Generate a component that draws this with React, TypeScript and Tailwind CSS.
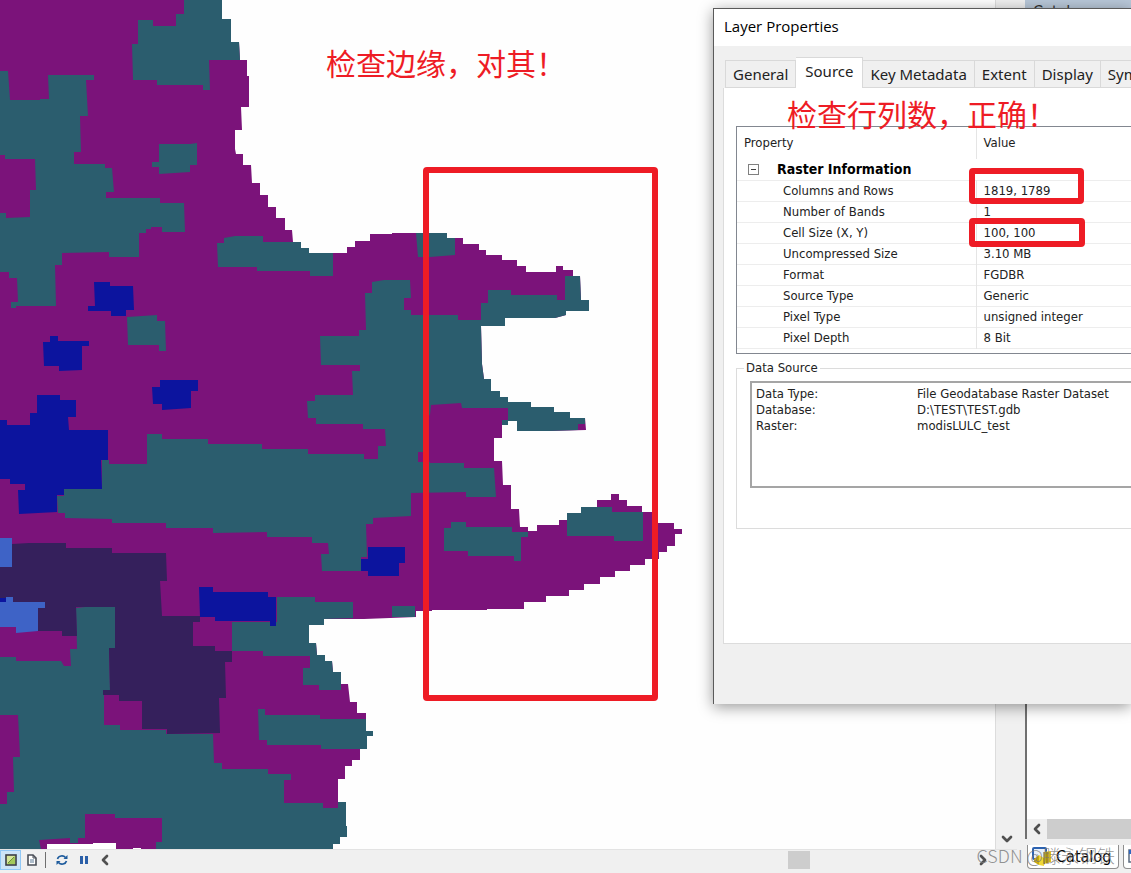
import React, { useState } from 'react';

import { clsx } from 'clsx';

import {
  ChevronDown,
  ChevronLeft,
  ChevronRight,
} from 'lucide-react';

interface Region {
  fill: string;
  d: string;
}

const COLORS = {
  purple: '#7b137a',
  teal: '#2b5d6e',
  indigo: '#35205c',
  blue: '#0c149e',
  sky: '#3e63c6',
};

/*
 * Regiones del ráster, de abajo hacia arriba
 */
const REGIONS: Region[] = [
  {
    fill: COLORS.purple,
    d: 'M0 0H222V19H231V42H239L240 60H247V76H249V107H241L242 130H235V149L236 154H243V165H251L252 183H260V195H268V207H276V218H285V230H292L293 242H301V248H309V253H347V247H355V241H370V234H392V233H447V238H463V244H479V250H486V255H502V260H517V266H526V272H556V266H563V270H573V276H580L581 300H589V311H566V315L555 318H505V326H481L482 364L484 379H491V391H500V397H508V402H531V407H554V412H570V418H585L586 430L549 431H517V421H508V425H502V438H494V461H502L503 485H511V509H519L520 527H528V531H537V525H559V520H567V513H581V507H597V500H611V494H619V500H627V506H642V512H652V523H674V529H682V534H675V546H667V552H659V559H645V565H630V571H615V577H600V584H584V590H569V596H546V602H524V609H487V610H432V611H416V617L364 619H324V625H309V643H316L317 655H325V661H332L333 672H341V684H348L350 702H357V713H366V731H373V736H367V749H360V760H352V766H345V779H338V802H346V826H347V837H340V844H333V849H0Z',
  },
  {
    fill: COLORS.teal,
    d: 'M184 0H222V19H231V42H239L240 60H209L210 90H203V85H157V80H133L132 44H138V20H153V26H176V14H184Z',
  },
  {
    fill: COLORS.teal,
    d: 'M0 71H8L10 100H40V99H49L48 75H94V80H86L88 116H80L81 152H74V164H105V168H112L114 192H106V198H160V203H184L185 232H162V227H151V229H146V233H139V257H109V252L62 253V265H55L56 306H16V308H11V302H18L17 278H9V272H0V213H6V218L30 217V190H36L35 159H5V155H0Z',
  },
  {
    fill: COLORS.teal,
    d: 'M159 144H190L197 143V165H190V172L159 174V167H152V162H159Z',
  },
  {
    fill: COLORS.teal,
    d: 'M217 243H224V238L235 236H263V242H301V248H309V253H333V276H310V271H257V267H218Z',
  },
  {
    fill: COLORS.teal,
    d: 'M127 317L157 315V321H165L166 351H159V345H128Z',
  },
  {
    fill: COLORS.teal,
    d: 'M416 233H447V238H455V255L430 257H418Z',
  },
  {
    fill: COLORS.teal,
    d: 'M372 282L384 280H410L411 298H404V310H411V315H458V320H481V303H488V290H511V295H557V300H565V276H580L581 300H589V311H566V315L555 318H505V326H481L482 364L484 379H491V391H500V397H508V402H531V407H554V412H570V418H585V424H578V430L549 431H517V421H508V425H502V420H508V408H462L461 403L431 405L430 415H424V452H418V462H430V463H464V468H494L496 497H466V492L411 493V516L373 518V524H366L367 557H361V571H322L321 554H329L328 543H312V537H267V532L213 533V528H166V523H112V519L65 518V513H58L57 496H64V489H102V460H109V464H147V434H162V439H208V444H262V449H308V454H364V459H378V446H386L385 429H363V424H316V418H308L307 401H315V395H353L352 371H360V365H321L320 336H359V330H366L365 293H372Z',
  },
  {
    fill: COLORS.teal,
    d: 'M444 528H451V522H466V527H512V532H528V537H521V561H514V556H468V551H444Z',
  },
  {
    fill: COLORS.teal,
    d: 'M567 513H581V507H612V512H643V541H614V536H567Z',
  },
  {
    fill: COLORS.teal,
    d: 'M392 606H415V617H392Z',
  },
  {
    fill: COLORS.teal,
    d: 'M277 597H315V602H353V618L324 619V625H309V643H316L317 655H325V661H332L333 672H341V690H319V685H303V668H310V656H263V651H232V622H277Z',
  },
  {
    fill: COLORS.teal,
    d: 'M258 709H265V715H320V719H366V731H373V736H367V749H321V745H267V740H259Z',
  },
  {
    fill: COLORS.teal,
    d: 'M76 608L85 607H115V648H109L110 690H104V725H120V730H166V734H213L214 763H222V769H268V774H291V780H284V803H323V808H338V802H346V826H347V837H340V844H333V849H156V842H162V818H115V814H85V838H78V843H70V838L39 840L41 849H0V804H7V792H14L13 757H20L18 715H0V657H16V661H61L64 666H71L70 649H77Z',
  },
  {
    fill: COLORS.indigo,
    d: 'M0 567H12V544L29 543H66V548H112V553H166L167 581H160L162 616H200V622H193V646H215V651H232V662H225L226 698H219L220 733L167 734V729H142V701H119V695H103V690H110L109 648H115V607H76L77 636H62V631H38V602H0Z',
  },
  {
    fill: COLORS.sky,
    d: 'M0 538H12V567H0ZM0 602H6V597H13V602H45V608H38V631L16 633V627H0Z',
  },
  {
    fill: COLORS.blue,
    d: 'M0 598H6V602H0ZM94 282H110V286H133L134 310H126V316H111V311H88V306H95ZM43 342H50V336H58V341H89V346H82V370L59 371V366H44ZM160 380H198V391H191V408L162 410V404H153L152 387H160ZM37 395H60V400H76V417H68L69 430H108V460H101L102 489H64V495H57V512L19 514L18 490H25V484H10V479H0V420H7V425H30V413H37ZM368 547H405V563H399V576H368V571H361V559H368ZM199 587H213V592H268V597H276V626H270V621H215V617H200Z',
  },
  {
    fill: '#ffffff',
    d: 'M47 844H93V843H116V849H47ZM133 848H141V849H133Z',
  },
];

const TABS = [
  'General',
  'Source',
  'Key Metadata',
  'Extent',
  'Display',
  'Symbology',
];

const RASTER_INFO = [
  ['Columns and Rows', '1819, 1789'],
  ['Number of Bands', '1'],
  ['Cell Size (X, Y)', '100, 100'],
  ['Uncompressed Size', '3.10 MB'],
  ['Format', 'FGDBR'],
  ['Source Type', 'Generic'],
  ['Pixel Type', 'unsigned integer'],
  ['Pixel Depth', '8 Bit'],
];

const DATA_SOURCE = [
  ['Data Type:', 'File Geodatabase Raster Dataset'],
  ['Database:', 'D:\\TEST\\TEST.gdb'],
  ['Raster:', 'modisLULC_test'],
];

const MapView: React.FC = () => (
  <div className="relative min-w-0 flex-1 overflow-hidden bg-[#fefefe]">
    <svg
      width="995"
      height="849"
      viewBox="0 0 995 849"
      className="block max-w-none"
      aria-label="Raster map"
    >
      {REGIONS.map((region, i) => (
        <path key={i} fill={region.fill} d={region.d} />
      ))}

      <rect
        x="426"
        y="170"
        width="229"
        height="528"
        rx="1"
        fill="none"
        stroke="#ee1c25"
        strokeWidth="6"
        strokeLinejoin="round"
      />
    </svg>
  </div>
);

const DataViewIcon: React.FC = () => (
  <svg width="12" height="12" viewBox="0 0 12 12">
    <rect x="1" y="1" width="10" height="10" fill="#d6e69a" stroke="#3b3f45" strokeWidth="1.6" />
    <path d="M2 10L10 2V10Z" fill="#a3c95a" />
    <path d="M3 9L9 3" stroke="#6d8f3a" strokeWidth="1" />
  </svg>
);

const LayoutViewIcon: React.FC = () => (
  <svg width="12" height="12" viewBox="0 0 12 12" fill="none" stroke="#4a4f58">
    <path d="M2 1H7L10 4V11H2Z" fill="#ffffff" strokeWidth="1.6" />
    <path d="M7 1V4H10" />
    <path d="M4 6H8M4 8H8" stroke="#5c7a96" />
  </svg>
);

const RefreshIcon: React.FC = () => (
  <svg width="12" height="12" viewBox="0 0 12 12" fill="none" stroke="#1c5a9c" strokeWidth="1.6">
    <path d="M1.5 5A4.5 4 0 0 1 9.5 3.5" />
    <path d="M10.5 7A4.5 4 0 0 1 2.5 8.5" />
    <path d="M11.5 1V5H7.5Z" fill="#1c5a9c" stroke="none" />
    <path d="M.5 11V7H4.5Z" fill="#1c5a9c" stroke="none" />
  </svg>
);

const PauseIcon: React.FC = () => (
  <svg width="10" height="10" viewBox="0 0 10 10" fill="#2a5fa8">
    <rect x="1" y="1" width="3" height="8" />
    <rect x="6" y="1" width="3" height="8" />
  </svg>
);

const CatalogIcon: React.FC = () => (
  <svg width="20" height="20" viewBox="0 0 20 20">
    <rect x="1" y="1" width="13" height="11" rx="1" fill="#e8f0fa" stroke="#2c62b0" strokeWidth="2" />
    <path d="M2 12L7 8V18L2 15Z" fill="#c9a80c" />
    <path d="M7 8L12 11V19L7 18Z" fill="#f0d738" />
    <path d="M12 5L19 4V15L12 17Z" fill="#e2c21c" />
    <path d="M12 5V17M15 5V16" stroke="#6e5a08" />
  </svg>
);

const WindowIcon: React.FC = () => (
  <svg width="16" height="16" viewBox="0 0 16 16">
    <rect x="1" y="1" width="14" height="12" fill="#ffffff" stroke="#5b6b80" strokeWidth="1.5" />
    <rect x="1" y="1" width="14" height="4" fill="#2f67c0" />
    <path d="M5 9H12" stroke="#2f67c0" />
  </svg>
);

const StatusBar: React.FC = () => (
  <div className="flex h-6 shrink-0 items-start border-t border-[#e3e3e3] bg-[#f0f0f0] pr-6">
    <button
      type="button"
      aria-label="Data view"
      className="flex h-5 w-[21px] items-center justify-center border border-[#90c8f6] bg-[#cce4f7]"
    >
      <DataViewIcon />
    </button>
    <button
      type="button"
      aria-label="Layout view"
      className="flex h-5 w-[21px] items-center justify-center"
    >
      <LayoutViewIcon />
    </button>
    <div className="mt-0.5 mr-1 ml-[3px] h-4 w-px bg-[#6f6f6f]" />
    <button
      type="button"
      aria-label="Refresh"
      className="flex h-5 w-6 items-center justify-center"
    >
      <RefreshIcon />
    </button>
    <button
      type="button"
      aria-label="Pause drawing"
      className="flex h-5 w-5 items-center justify-center"
    >
      <PauseIcon />
    </button>
    <button
      type="button"
      aria-label="Scroll left"
      className="flex h-5 w-[22px] items-center justify-center text-[#505050]"
    >
      <ChevronLeft size={16} strokeWidth={4} />
    </button>
    <div className="flex h-full flex-1 justify-end">
      <div className="mt-px mr-[163px] h-[18px] w-[22px] bg-[#cdcdcd]" />
    </div>
    <button
      type="button"
      aria-label="Scroll right"
      className="flex h-5 w-5 items-center justify-center text-[#505050]"
    >
      <ChevronRight size={16} strokeWidth={4} />
    </button>
  </div>
);

const CatalogPanel: React.FC = () => (
  <aside className="flex w-[114px] shrink-0 flex-col bg-[#f0f0f0] pl-2">
    <header className="h-7 bg-[#b8c7d8] pl-2 text-base text-[#333]">
      Catalog
    </header>
    <div className="flex-1 border-l-2 border-[#707070] bg-white" />
    <div className="flex h-5 border-l-2 border-[#707070]">
      <button
        type="button"
        aria-label="Scroll catalog left"
        className="flex w-5 items-center justify-center text-[#505050]"
      >
        <ChevronLeft size={16} strokeWidth={4} />
      </button>
      <div className="flex-1 bg-[#cdcdcd]" />
    </div>
    <div className="flex h-[34px] items-start gap-1 overflow-hidden pt-1.5 pl-0.5">
      <button
        type="button"
        className="flex h-6 w-[92px] shrink-0 items-center gap-1 rounded-b border border-t-0 border-[#8f8f8f] bg-white pl-1 text-base text-black"
      >
        <CatalogIcon />
        Catalog
      </button>
      <button
        type="button"
        aria-label="Search"
        className="flex h-6 w-8 shrink-0 items-center rounded-b border border-t-0 border-[#8f8f8f] bg-white pl-1"
      >
        <WindowIcon />
      </button>
    </div>
  </aside>
);

const LayerProperties: React.FC = () => {
  const [activeTab, setActiveTab] =
    useState('Source');

  return (
    <section
      role="dialog"
      aria-label="Layer Properties"
      className="absolute top-2 right-0 left-[713px] flex h-[696px] flex-col border-t border-l border-[#5a5a5a] bg-[#f0f0f0] shadow-[0_3px_14px_rgba(0,0,0,0.4)]"
    >
      <h1 className="h-[37px] shrink-0 bg-white pl-2.5 font-['Open_Sans','Noto_Sans',sans-serif] text-[15px] leading-[34px] text-black">
        Layer Properties
      </h1>

      <div
        role="tablist"
        className="mt-[11px] ml-[11px] flex h-[31px] shrink-0 items-end overflow-hidden font-['Noto_Sans',sans-serif] text-[15px]"
      >
        {TABS.map((tab) => (
          <button
            key={tab}
            type="button"
            role="tab"
            aria-selected={tab === activeTab}
            onClick={() => setActiveTab(tab)}
            className={clsx(
              'shrink-0 border-t border-r border-[#d9d9d9] text-[#222]',
              tab === activeTab
                ? 'h-[31px] bg-white px-[9px] pb-1'
                : 'h-7 border-b bg-[#f0f0f0] px-[7px]',
              tab === 'General' && 'border-l'
            )}
          >
            {tab}
          </button>
        ))}
      </div>

      <div className="mb-[60px] ml-[9px] flex-1 border-b border-l border-[#dcdcdc] bg-white pt-[38px] pl-3 text-[#222]">
        <div className="h-[228px] border border-r-0 border-[#828790]">
          <table className="w-full table-fixed border-collapse text-left">
            <thead>
              <tr className="h-8">
                <th className="w-[239px] border-r border-[#e5e5e5] pl-[7px] font-normal">
                  Property
                </th>
                <th className="pl-[7px] font-normal">Value</th>
              </tr>
            </thead>
            <tbody>
              <tr className="h-[21px] border-b border-[#ededed]">
                <th
                  colSpan={2}
                  className="p-0 text-sm leading-5 font-bold text-black"
                >
                  <div className="flex items-center gap-[18px] pl-[11px]">
                    <button
                      type="button"
                      aria-label="Collapse Raster Information"
                      className="flex h-[11px] w-[11px] items-center justify-center border border-[#808080]"
                    >
                      <span className="h-px w-[5px] bg-[#404040]" />
                    </button>
                    Raster Information
                  </div>
                </th>
              </tr>
              {RASTER_INFO.map(([label, value]) => (
                <tr
                  key={label}
                  className="h-[21px] border-b border-[#ededed]"
                >
                  <td className="border-r border-[#e5e5e5] py-0 pl-[46px]">
                    {label}
                  </td>
                  <td className="py-0 pl-[7px]">{value}</td>
                </tr>
              ))}
            </tbody>
          </table>
        </div>

        <fieldset className="mt-1.5 h-[169px] border border-r-0 border-[#dcdcdc] pl-[13px]">
          <legend className="-ml-1.5 px-0.5 leading-4">
            Data Source
          </legend>
          <div className="mt-[5px] h-[107px] border-2 border-r-0 border-[#a5a5a5] pt-[3px] pl-1 leading-4">
            {DATA_SOURCE.map(([label, value]) => (
              <div key={label} className="flex">
                <span className="w-[161px] shrink-0">
                  {label}
                </span>
                <span className="whitespace-nowrap">
                  {value}
                </span>
              </div>
            ))}
          </div>
        </fieldset>
      </div>
    </section>
  );
};

export default function App() {
  return (
    <main className="relative flex h-screen flex-col overflow-hidden bg-[#f0f0f0] font-['DejaVu_Sans_Condensed','DejaVu_Sans',sans-serif] text-[13px]">
      <div className="flex min-h-0 flex-1">
        <div className="flex min-w-0 flex-1 flex-col">
          <div className="flex min-h-0 flex-1">
            <MapView />
            <div className="flex w-[22px] shrink-0 items-end justify-center border-l border-[#dcdcdc] bg-[#f0f0f0] pb-0.5">
              <button
                type="button"
                aria-label="Scroll down"
                className="text-[#505050]"
              >
                <ChevronDown size={16} strokeWidth={4} />
              </button>
            </div>
          </div>
          <StatusBar />
        </div>
        <CatalogPanel />
      </div>

      <LayerProperties />

      {/* Anotaciones sobre el mapa y el diálogo */}
      <p className="absolute top-[42px] left-[326px] font-['Noto_Sans_CJK_SC',sans-serif] text-[30px] leading-10 whitespace-nowrap text-[#ee1c25]">
        检查边缘，对其！
      </p>
      <p className="absolute top-[93px] left-[787px] font-['Noto_Sans_CJK_SC',sans-serif] text-[30px] leading-10 whitespace-nowrap text-[#ee1c25]">
        检查行列数，正确！
      </p>
      <div className="pointer-events-none absolute top-[168px] left-[969px] h-9 w-[115px] rounded-sm border-[6px] border-[#ee1c25]" />
      <div className="pointer-events-none absolute top-[218px] left-[969px] h-[29px] w-[116px] rounded-sm border-[6px] border-[#ee1c25]" />

      <p className="pointer-events-none absolute right-4 bottom-1.5 font-['Noto_Sans_CJK_SC',sans-serif] text-[18px] leading-6 font-light whitespace-nowrap text-[#777]/80">
        CSDN @滕永钢铁
      </p>
    </main>
  );
}
